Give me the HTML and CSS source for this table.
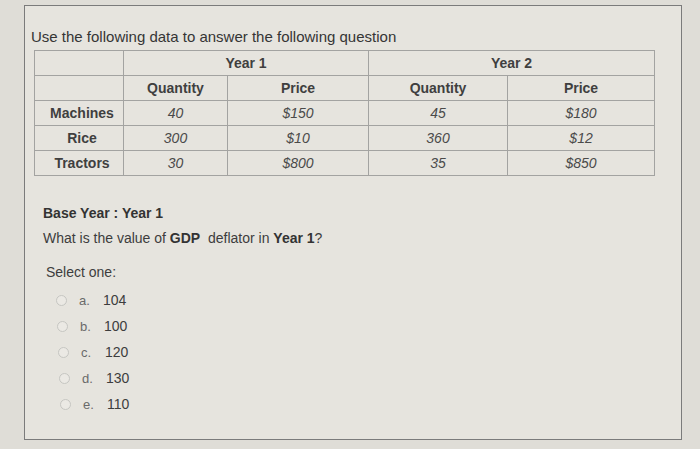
FILE: index.html
```html
<!DOCTYPE html>
<html>
<head>
<meta charset="utf-8">
<link rel="stylesheet" href="styles.css">
</head>
<body>
<div class="panel">
  <p class="title">Use the following data to answer the following question</p>
  <table class="data">
    <colgroup>
      <col class="c-label"><col class="c-q1"><col class="c-p1"><col class="c-q2"><col class="c-p2">
    </colgroup>
    <tr class="r-year">
      <th></th>
      <th colspan="2">Year 1</th>
      <th colspan="2">Year 2</th>
    </tr>
    <tr class="r-head">
      <th></th>
      <th>Quantity</th>
      <th>Price</th>
      <th>Quantity</th>
      <th>Price</th>
    </tr>
    <tr class="r-data">
      <th>Machines</th>
      <td>40</td><td>$150</td><td>45</td><td>$180</td>
    </tr>
    <tr class="r-data">
      <th>Rice</th>
      <td>300</td><td>$10</td><td>360</td><td>$12</td>
    </tr>
    <tr class="r-data">
      <th>Tractors</th>
      <td>30</td><td>$800</td><td>35</td><td>$850</td>
    </tr>
  </table>
  <div class="question">
    <p class="q-line"><b>Base Year : Year 1</b></p>
    <p class="q-line">What is the value of <b>GDP</b>&nbsp; deflator in <b>Year 1</b>?</p>
  </div>
  <div class="answers">
    <p class="select">Select one:</p>
    <div class="opt o1"><span class="radio"></span><span class="letter">a.</span><span class="val">104</span></div>
    <div class="opt o2"><span class="radio"></span><span class="letter">b.</span><span class="val">100</span></div>
    <div class="opt o3"><span class="radio"></span><span class="letter">c.</span><span class="val">120</span></div>
    <div class="opt o4"><span class="radio"></span><span class="letter">d.</span><span class="val">130</span></div>
    <div class="opt o5"><span class="radio"></span><span class="letter">e.</span><span class="val">110</span></div>
  </div>
</div>
</body>
</html>
```
FILE: styles.css
```css
html, body {
  margin: 0;
  padding: 0;
  background: #dfddd7;
  width: 700px;
  height: 449px;
  overflow: hidden;
  font-family: "Liberation Sans", Arial, sans-serif;
  color: #3b3b3b;
}
.panel {
  box-sizing: border-box;
  margin: 5px 0 0 24px;
  width: 658px;
  height: 435px;
  background: #e6e4de;
  border: 1.5px solid #7b7b7b;
  padding: 22px 0 0 6px;
}
p { margin: 0; }
.title {
  font-size: 15px;
  line-height: 18px;
  color: #353535;
}
.data {
  margin: 4px 0 0 3px;
  border-collapse: collapse;
  border: 1.5px solid #8a8a8a;
  table-layout: fixed;
  width: 620px;
  font-size: 14px;
}
.c-label { width: 89px; }
.c-q1 { width: 104px; }
.c-p1 { width: 141px; }
.c-q2 { width: 139px; }
.c-p2 { width: 147px; }
.data th, .data td {
  border: 1px solid #a3a3a1;
  text-align: center;
  padding: 0;
  color: #3f3f3f;
}
.data th { font-weight: bold; }
.data td { font-style: italic; color: #4a4a4a; }
.r-year { height: 25px; }
.r-head { height: 25px; }
.r-data { height: 25px; }
.r-data th { padding-left: 6px; }
.question {
  padding: 25px 0 0 12px;
  font-size: 14px;
  line-height: 25px;
  color: #3d3d3d;
}
.question b { color: #333; }
.answers {
  padding: 11px 0 0 15px;
  font-size: 14px;
}
.select {
  line-height: 20px;
  color: #3d3d3d;
  margin-bottom: 5px;
}
.opt {
  display: flex;
  align-items: center;
  height: 26px;
}
.radio {
  box-sizing: border-box;
  width: 11px;
  height: 11px;
  border-radius: 50%;
  border: 1px solid #c6c6c2;
  background: #ebe9e4;
  margin-left: 10px;
}
.letter {
  margin-left: 12px;
  width: 24px;
  color: #6a6a6a;
  font-size: 13px;
}
.val { color: #3d3d3d; }
.o2 .radio { margin-left: 11px; }
.o3 .radio { margin-left: 12px; }
.o4 .radio { margin-left: 13px; }
.o5 .radio { margin-left: 14px; }
```
